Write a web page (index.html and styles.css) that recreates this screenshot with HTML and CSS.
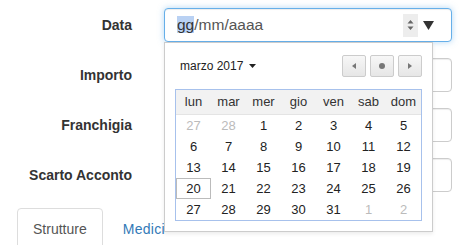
FILE: index.html
```html
<!DOCTYPE html>
<html lang="it">
<head>
<meta charset="utf-8">
<link rel="stylesheet" href="styles.css">
</head>
<body>
<div class="form">
  <div class="row">
    <label class="lbl">Data</label>
    <div class="ctl">
      <div class="date-input">
        <span class="val"><span class="sel">gg</span>/mm/aaaa</span>
        <span class="spin"><svg width="9" height="14" viewBox="0 0 9 14"><path d="M1.5 5.5 L4.5 2 L7.5 5.5Z M1.5 8.5 L4.5 12 L7.5 8.5Z" fill="#666"/></svg></span>
        <span class="drop"><svg width="11" height="9" viewBox="0 0 11 9"><path d="M0 0 H11 L5.5 9Z" fill="#333"/></svg></span>
      </div>
      <div class="picker">
        <div class="ph">
          <span class="month">marzo 2017 <svg width="7" height="4" viewBox="0 0 7 4"><path d="M0 0 H7 L3.5 4Z" fill="#222"/></svg></span>
          <div class="btns">
            <span class="btn"><svg width="4" height="6" viewBox="0 0 4 6"><path d="M4 0 V6 L0 3Z" fill="#777"/></svg></span>
            <span class="btn"><svg width="6" height="6" viewBox="0 0 6 6"><circle cx="3" cy="3" r="3" fill="#777"/></svg></span>
            <span class="btn"><svg width="4" height="6" viewBox="0 0 4 6"><path d="M0 0 V6 L4 3Z" fill="#777"/></svg></span>
          </div>
        </div>
        <div class="cal">
          <div class="head"><span>lun</span><span>mar</span><span>mer</span><span>gio</span><span>ven</span><span>sab</span><span>dom</span></div>
          <div class="wk"><span class="off">27</span><span class="off">28</span><span>1</span><span>2</span><span>3</span><span>4</span><span>5</span></div>
          <div class="wk"><span>6</span><span>7</span><span>8</span><span>9</span><span>10</span><span>11</span><span>12</span></div>
          <div class="wk"><span>13</span><span>14</span><span>15</span><span>16</span><span>17</span><span>18</span><span>19</span></div>
          <div class="wk"><span class="today">20</span><span>21</span><span>22</span><span>23</span><span>24</span><span>25</span><span>26</span></div>
          <div class="wk"><span>27</span><span>28</span><span>29</span><span>30</span><span>31</span><span class="off">1</span><span class="off">2</span></div>
        </div>
      </div>
    </div>
  </div>
  <div class="row">
    <label class="lbl">Importo</label>
    <div class="ctl"><div class="input"></div></div>
  </div>
  <div class="row">
    <label class="lbl">Franchigia</label>
    <div class="ctl"><div class="input"></div></div>
  </div>
  <div class="row">
    <label class="lbl">Scarto Acconto</label>
    <div class="ctl"><div class="input"></div></div>
  </div>
  <ul class="tabs">
    <li class="tab active">Strutture</li>
    <li class="tab link">Medici</li>
  </ul>
</div>
</body>
</html>
```
FILE: styles.css
```css
html, body {
  margin: 0;
  padding: 0;
  background: #fff;
  overflow: hidden;
}
body {
  font-family: "Liberation Sans", Arial, sans-serif;
  font-size: 14px;
  color: #333;
  width: 474px;
  height: 245px;
}
.form {
  padding-top: 8px;
}
.row {
  display: grid;
  grid-template-columns: 132px 288px;
  column-gap: 32px;
  height: 34px;
  margin-bottom: 16px;
  align-items: center;
}
.lbl {
  font-weight: bold;
  text-align: right;
  font-size: 14px;
  line-height: 20px;
}
.ctl {
  position: relative;
  height: 34px;
}
.input {
  height: 34px;
  box-sizing: border-box;
  border: 1px solid #ccc;
  border-radius: 4px;
  background: #fff;
  box-shadow: inset 0 1px 1px rgba(0,0,0,0.075);
}
.date-input {
  height: 34px;
  box-sizing: border-box;
  border: 1px solid #66afe9;
  border-radius: 4px;
  background: #fff;
  box-shadow: inset 0 1px 1px rgba(0,0,0,.075), 0 0 6px rgba(102,175,233,.5);
  display: flex;
  align-items: center;
  padding-left: 12px;
  padding-right: 17px;
}
.val {
  flex: 1;
  font-size: 15.5px;
  color: #555;
  line-height: 18px;
}
.sel {
  background: #b9d1f3;
  color: #333;
}
.spin {
  width: 15px;
  height: 23px;
  background: #ededed;
  display: flex;
  align-items: center;
  justify-content: center;
  margin-right: 5px;
}
.drop {
  display: flex;
  align-items: center;
}
.picker {
  position: absolute;
  left: 0;
  top: 34px;
  width: 269px;
  box-sizing: border-box;
  background: #fff;
  border: 1px solid #ccc;
  box-shadow: 0 2px 4px rgba(0,0,0,0.08);
  padding: 12px 10px 10px 10px;
  z-index: 5;
}
.ph {
  display: flex;
  justify-content: space-between;
  align-items: center;
  height: 22px;
  margin-bottom: 12px;
}
.month {
  font-size: 12px;
  color: #222;
  padding-left: 5px;
  display: flex;
  align-items: center;
  gap: 6px;
}
.btns {
  display: flex;
  gap: 4px;
}
.btn {
  width: 24px;
  height: 22px;
  box-sizing: border-box;
  border: 1px solid #ccc;
  border-radius: 2px;
  background: linear-gradient(#f7f7f7, #e6e6e6);
  display: flex;
  align-items: center;
  justify-content: center;
}
.cal {
  border: 1px solid #a7c1ec;
  font-size: 13px;
}
.head, .wk {
  display: grid;
  grid-template-columns: repeat(7, 1fr);
  text-align: center;
}
.head {
  height: 24px;
  line-height: 24px;
  background: #f2f2f2;
  border-bottom: 1px solid #e4e4e4;
  color: #333;
}
.wk {
  height: 21px;
  line-height: 21px;
  color: #222;
}
.wk span {
  box-sizing: border-box;
}
.wk .off {
  color: #bbb;
}
.wk .today {
  border: 1px solid #bbb;
  line-height: 19px;
}
.tabs {
  list-style: none;
  margin: 0;
  padding: 0 0 0 17px;
  display: flex;
}
.tab {
  padding: 10px 15px;
  line-height: 20px;
  font-size: 14px;
  margin-right: 2px;
  border: 1px solid transparent;
  border-radius: 4px 4px 0 0;
}
.tab.active {
  border-color: #ddd;
  color: #555;
}
.tab.link {
  color: #337ab7;
  padding-left: 17px;
  letter-spacing: 0.3px;
}
```
